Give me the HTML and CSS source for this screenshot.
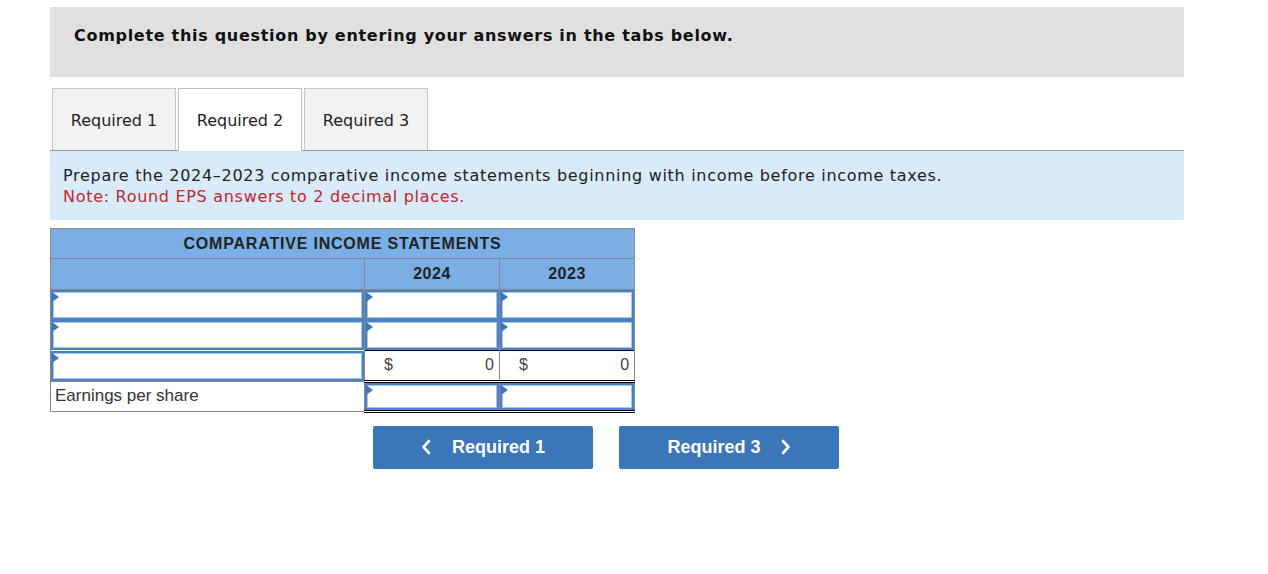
FILE: index.html
```html
<!DOCTYPE html>
<html>
<head>
<meta charset="utf-8">
<link rel="stylesheet" href="styles.css">
</head>
<body>
<div class="page">
  <div class="banner">Complete this question by entering your answers in the tabs below.</div>
  <div class="tabs">
    <div class="tab">Required 1</div>
    <div class="tab active">Required 2</div>
    <div class="tab">Required 3</div>
  </div>
  <div class="info">
    <div class="instr">Prepare the 2024–2023 comparative income statements beginning with income before income taxes.</div>
    <div class="note">Note: Round EPS answers to 2 decimal places.</div>
  </div>
  <table class="stmt">
    <colgroup><col class="c1"><col class="c2"><col class="c3"></colgroup>
    <tr><th colspan="3" class="title">COMPARATIVE INCOME STATEMENTS</th></tr>
    <tr class="head"><th></th><th>2024</th><th>2023</th></tr>
    <tr class="row"><td><div class="inp"></div></td><td><div class="inp"></div></td><td><div class="inp"></div></td></tr>
    <tr class="row"><td><div class="inp"></div></td><td><div class="inp"></div></td><td><div class="inp"></div></td></tr>
    <tr class="row"><td><div class="inp"></div></td><td class="total"><span>$</span><span>0</span></td><td class="total"><span>$</span><span>0</span></td></tr>
    <tr class="row"><td class="label">Earnings per share</td><td class="dbl"><div class="inp"></div></td><td class="dbl"><div class="inp"></div></td></tr>
  </table>
  <div class="nav">
    <div class="btn"><svg class="chev" width="10" height="16" viewBox="0 0 10 16"><polyline points="8,2 2.5,8 8,14" fill="none" stroke="#fff" stroke-width="2.6" stroke-linecap="round" stroke-linejoin="round"/></svg>Required 1</div>
    <div class="btn">Required 3<svg class="chev r" width="10" height="16" viewBox="0 0 10 16"><polyline points="2,2 7.5,8 2,14" fill="none" stroke="#fff" stroke-width="2.6" stroke-linecap="round" stroke-linejoin="round"/></svg></div>
  </div>
</div>
</body>
</html>
```

FILE: styles.css
```css
html, body { margin: 0; padding: 0; background: #fff; }
body { font-family: "DejaVu Sans", Verdana, sans-serif; color: #222; }
.page { padding: 7px 0 0 50px; width: 1134px; }
.banner {
  background: #e0e0e0;
  height: 70px;
  box-sizing: border-box;
  padding: 19px 0 0 24px;
  font-weight: bold;
  font-size: 16px;
  letter-spacing: 0.7px;
  color: #111;
}
.tabs { display: flex; gap: 2px; padding: 11px 0 0 2px; position: relative; z-index: 1; }
.tab {
  width: 124px; height: 62px;
  box-sizing: border-box;
  border: 1px solid #c8c8c8;
  border-bottom: none;
  background: #f2f2f2;
  font-size: 16px;
  color: #222;
  display: flex; align-items: center; justify-content: center;
  padding-top: 2px;
}
.tab.active { background: #fff; border-color: #bdbdbd; height: 63px; margin-bottom: -1px; padding-top: 1px; }
.info {
  background: #d9eaf8;
  border-top: 1px solid #999;
  height: 70px;
  box-sizing: border-box;
  padding: 14px 0 0 13px;
  font-size: 16px;
  letter-spacing: 0.7px;
  line-height: 21px;
}
.note { color: #c0272d; }
.stmt {
  margin-top: 8px;
  border-collapse: collapse;
  table-layout: fixed;
  width: 585px;
  font-family: "Liberation Sans", Arial, sans-serif;
  border: 1px solid #888;
}
.c1 { width: 314px; } .c2 { width: 135px; } .c3 { width: 135px; }
.stmt th { background: #7aaee4; color: #222; font-size: 16px; font-weight: bold; border: 1px solid #888; padding: 0; }
.title { height: 29px; letter-spacing: 0.8px; }
.head th { height: 30px; letter-spacing: 0.5px; }
.row td { height: 30px; padding: 0; border-left: 1px solid #888; border-right: 1px solid #888; vertical-align: top; }
.inp {
  position: relative;
  height: 30px;
  box-sizing: border-box;
  border: 2px solid #4a80c4;
  box-shadow: inset 0 0 0 1px #a8c6ea;
  background: #fff;
  margin: 0;
}
.inp::before {
  content: "";
  position: absolute; left: -1px; top: 0;
  border-left: 7px solid #3a76c0;
  border-top: 5px solid transparent;
  border-bottom: 5px solid transparent;
}
.total {
  border-top: 1px solid #000 !important;
  border-bottom: 3px double #000;
  font-size: 16px; color: #444;
  height: 26px !important;
}
.row td.total { vertical-align: middle; }
.total span:first-child { float: left; padding-left: 19px; }
.total span:last-child { float: right; padding-right: 5px; }
.label { font-size: 17px; color: #333; padding-left: 4px !important; vertical-align: middle !important; border-top: 1px solid #888; border-bottom: 1px solid #888; height: 27px !important; }
.row td.dbl { border-bottom: 3px double #000; height: 27px; }
.dbl .inp { height: 27px; }
.nav { display: flex; gap: 26px; padding: 13px 0 0 323px; }
.btn {
  width: 220px; height: 43px;
  background: #3a76b8;
  border-radius: 2px;
  color: #fff;
  font-family: "Liberation Sans", Arial, sans-serif;
  font-weight: bold;
  font-size: 18px;
  display: flex; align-items: center; justify-content: center;
}
.chev { margin-right: 21px; }
.chev.r { margin-right: 0; margin-left: 20px; }
```
